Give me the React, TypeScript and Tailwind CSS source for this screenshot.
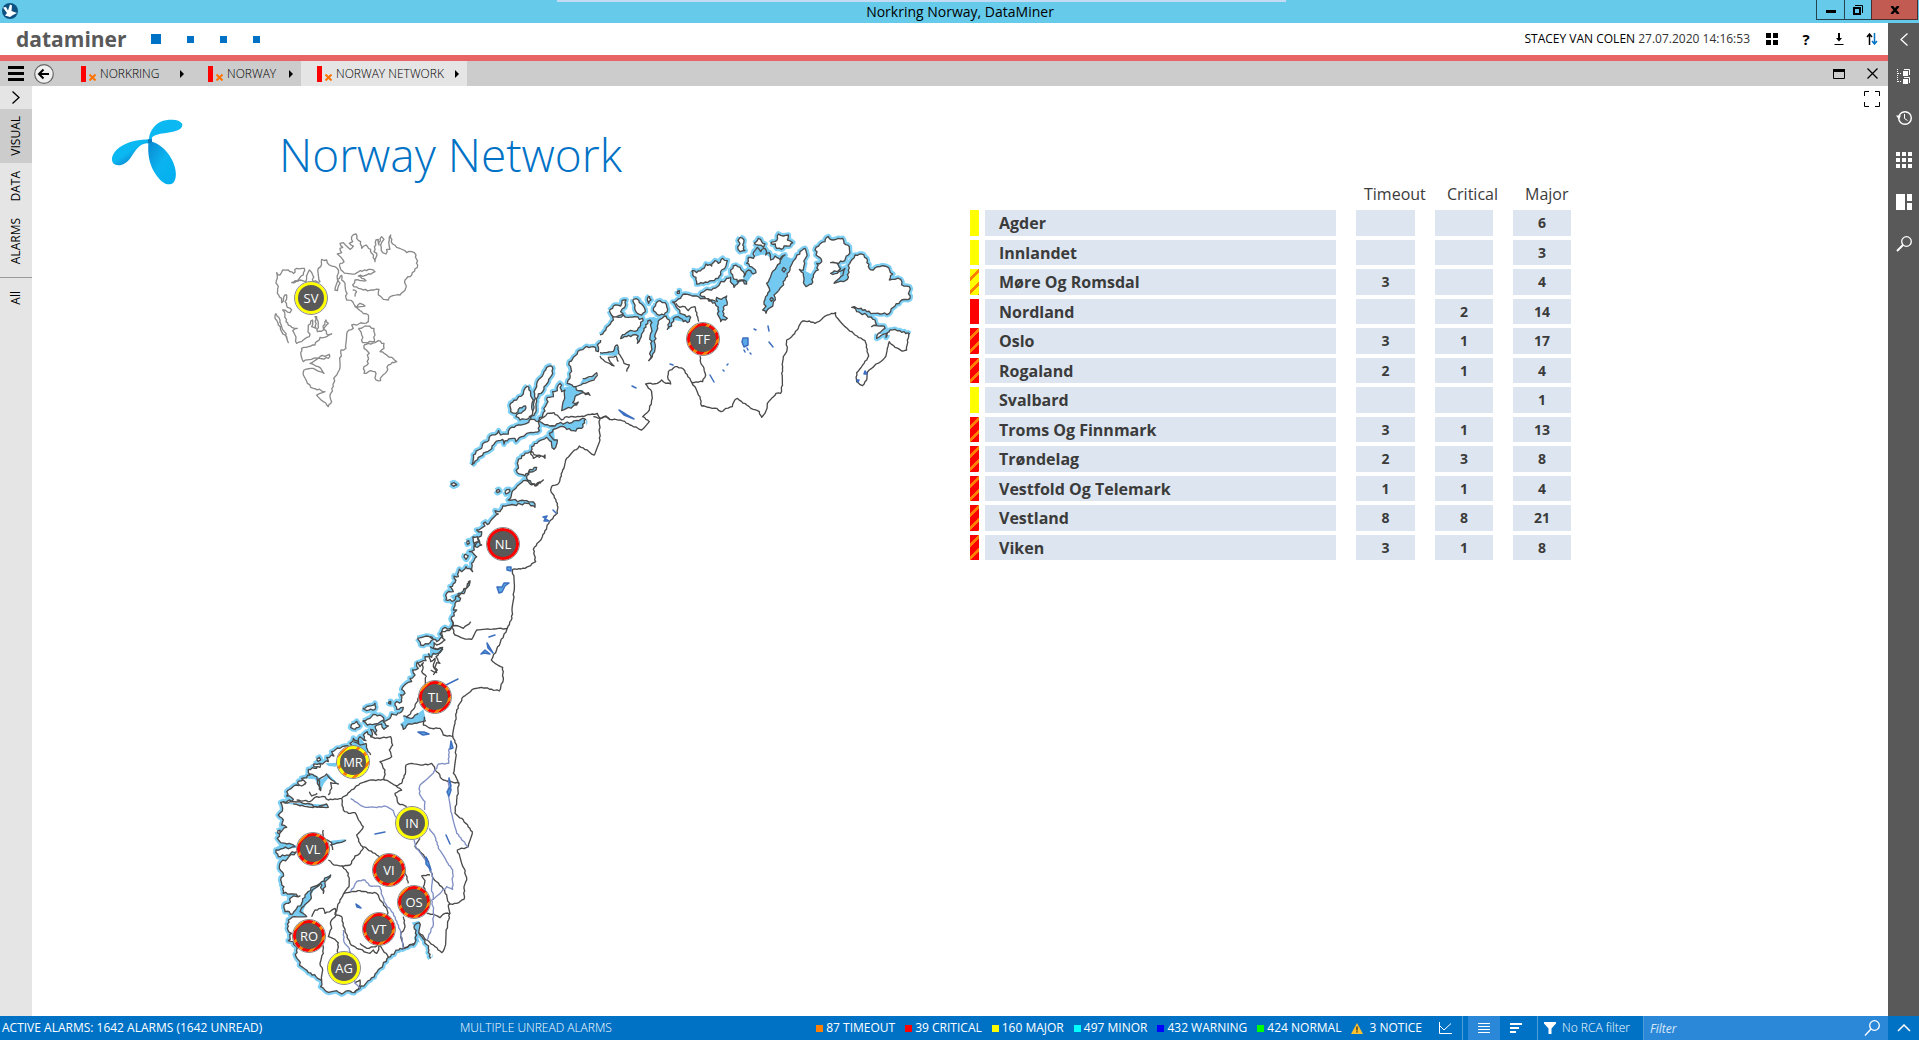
import { useState } from 'react';
import type { ReactNode } from 'react';
import clsx from 'clsx';

type Severity = 'major' | 'critical' | 'major-timeout' | 'critical-timeout';

interface Region {
  name: string;
  severity: Severity;
  timeout?: number;
  critical?: number;
  major?: number;
}

const regions: Region[] = [
  { name: 'Agder', severity: 'major', major: 6 },
  { name: 'Innlandet', severity: 'major', major: 3 },
  { name: 'Møre Og Romsdal', severity: 'major-timeout', timeout: 3, major: 4 },
  { name: 'Nordland', severity: 'critical', critical: 2, major: 14 },
  { name: 'Oslo', severity: 'critical-timeout', timeout: 3, critical: 1, major: 17 },
  { name: 'Rogaland', severity: 'critical-timeout', timeout: 2, critical: 1, major: 4 },
  { name: 'Svalbard', severity: 'major', major: 1 },
  { name: 'Troms Og Finnmark', severity: 'critical-timeout', timeout: 3, critical: 1, major: 13 },
  { name: 'Trøndelag', severity: 'critical-timeout', timeout: 2, critical: 3, major: 8 },
  { name: 'Vestfold Og Telemark', severity: 'critical-timeout', timeout: 1, critical: 1, major: 4 },
  { name: 'Vestland', severity: 'critical-timeout', timeout: 8, critical: 8, major: 21 },
  { name: 'Viken', severity: 'critical-timeout', timeout: 3, critical: 1, major: 8 },
];

const severityFill: Record<Severity, string> = {
  major: 'bg-[#ffff00]',
  critical: 'bg-[#ff0000]',
  'major-timeout':
    'bg-[repeating-linear-gradient(135deg,#ffff00_0px,#ffff00_6px,#ff8000_6px,#ff8000_9px)]',
  'critical-timeout':
    'bg-[repeating-linear-gradient(135deg,#ff0000_0px,#ff0000_6px,#ff8000_6px,#ff8000_9px)]',
};

// Pin centres on the map
const pins: { code: string; x: number; y: number; severity: Severity }[] = [
  { code: 'SV', x: 49, y: 73, severity: 'major' },
  { code: 'TF', x: 441, y: 114, severity: 'critical-timeout' },
  { code: 'NL', x: 241, y: 319, severity: 'critical' },
  { code: 'TL', x: 173, y: 472, severity: 'critical-timeout' },
  { code: 'MR', x: 91, y: 537, severity: 'major-timeout' },
  { code: 'IN', x: 150, y: 598, severity: 'major' },
  { code: 'VL', x: 51, y: 624, severity: 'critical-timeout' },
  { code: 'VI', x: 127, y: 645, severity: 'critical-timeout' },
  { code: 'OS', x: 152, y: 677, severity: 'critical-timeout' },
  { code: 'VT', x: 117, y: 704, severity: 'critical-timeout' },
  { code: 'RO', x: 47, y: 711, severity: 'critical-timeout' },
  { code: 'AG', x: 82, y: 743, severity: 'major' },
];

const legend = [
  { label: '87 TIMEOUT', color: 'bg-[#ff8000]' },
  { label: '39 CRITICAL', color: 'bg-[#ff0000]' },
  { label: '160 MAJOR', color: 'bg-[#ffff00]' },
  { label: '497 MINOR', color: 'bg-[#00ffff]' },
  { label: '432 WARNING', color: 'bg-[#0000ff]' },
  { label: '424 NORMAL', color: 'bg-[#00ff00]' },
];

/* ---------- Map drawing ---------- */

// Breaks long segments up so that a shoreline looks ragged
function rough(points: string, amount: number) {
  const pts = points.split(' ').map((p) => p.split(',').map(Number));
  const out: string[] = [];
  pts.forEach(([x, y], i) => {
    out.push(`${x},${y}`);
    const next = pts[i + 1];
    if (!next) return;
    const dx = next[0] - x;
    const dy = next[1] - y;
    const len = Math.hypot(dx, dy);
    const steps = Math.floor(len / 6);
    for (let k = 1; k < steps; k++) {
      const seed = Math.sin(x * 12.9 + y * 78.2 + k * 37.7) * 43758.5;
      const off = (seed - Math.floor(seed) - 0.5) * 2 * amount;
      const px = x + (dx * k) / steps - (dy / len) * off;
      const py = y + (dy * k) / steps + (dx / len) * off;
      out.push(`${px.toFixed(1)},${py.toFixed(1)}`);
    }
  });
  return out.join(' ');
}

interface Sheet {
  transform: string;
  coasts: { line: string; inland: string }[];
  islands: string[];
  water: string[];
  borders: string[];
}

const sheets: Sheet[] = [
  // Lofoten and Vesterålen
  {
    transform: 'translate(260 220) scale(0.33333)',
    coasts: [
      {
        line: '975,597 950,601 935,608 890,612 885,618 862,614 835,605 850,578 856,560 864,545 862,532 880,530 878,515 892,512 900,490 905,515 915,510 912,540 905,572 920,565 950,555 955,546 938,548 945,530 962,520 985,518 990,526 972,518 962,512 940,500 922,490 930,475 932,440 928,425 945,408 960,390 980,379 1000,380 1015,395 1012,375 1022,360',
        inland: '1060,420 1060,590',
      },
    ],
    islands: [
      '635,735 640,705 655,690 665,685 668,672 682,665 690,648 712,640 716,632 722,645 745,642 750,625 775,615 800,610 815,598 835,605 838,632 820,638 800,640 785,650 768,665 765,655 735,662 732,672 728,658 705,668 690,690 655,712 642,730 635,735',
      '875,438 878,460 865,485 852,500 848,515 835,522 830,545 828,575 812,595 822,560 826,535 822,515 830,500 832,485 850,462 860,442 875,438',
      '802,498 812,520 820,540 815,560 818,580 800,598 780,600 768,590 770,584 795,570 797,558 775,568 768,580 752,575 752,550 770,540 776,530 790,522 795,505 802,498',
      '576,794 582,790 590,794 582,798 576,794',
    ],
    water: [
      '918,500 940,500 950,510 970,510 965,520 945,532 940,548 925,562 906,570 914,540',
      '975,597 965,615 945,628 920,625 895,628 895,616 935,608',
      '1010,462 995,472 968,478 958,496 975,486 1002,478',
    ],
    borders: [
      '835,605 850,592 862,580 882,578 905,600 920,590 960,590 990,584 1012,580 1018,592 1020,660 1003,705 958,678 920,715 908,750 900,780 893,793 878,797',
      '1000,590 1020,595 1038,590 1050,600',
      '940,500 958,496 975,490 1002,480 1012,466 1010,458 995,470 968,476',
    ],
  },
  // Troms and Finnmark
  {
    transform: 'translate(600 220) scale(0.33333)',
    coasts: [
      {
        line: '0,345 12,335 25,318 40,300 38,290 55,292 70,285 85,292 105,290 118,298 128,295 120,320 105,334 85,335 68,344 62,356 80,350 98,345 115,348 112,370 124,350 132,325 150,300 156,308 152,340 152,370 156,388 146,422 158,402 166,380 164,350 172,318 180,298 198,288 208,300 202,328 215,318 220,295 235,290 250,305 268,305 272,292 255,285 240,280 232,265 218,246 235,237 255,222 270,225 290,228 310,235 345,248 355,262 352,280 362,305 382,295 370,287 370,262 382,248 380,228 365,238 350,232 352,244 330,240 300,225 315,212 340,205 360,190 380,175 392,172 395,190 402,202 412,192 425,182 440,192 432,180 412,185 398,165 392,150 400,138 420,142 430,155 432,170 445,150 460,162 468,158 460,145 440,130 445,112 460,115 462,95 472,82 482,95 495,85 497,105 508,98 512,120 525,108 540,118 555,105 540,130 520,152 508,178 500,190 508,205 502,225 492,245 498,258 488,270 498,280 512,262 526,240 522,225 540,205 555,180 570,150 585,118 600,95 615,85 620,100 614,130 610,150 598,148 610,160 612,180 618,200 635,192 640,165 655,150 650,130 665,125 655,110 645,90 660,72 675,65 685,50 700,60 715,55 728,55 732,70 748,80 745,105 728,125 692,128 715,135 722,146 692,160 712,160 735,145 722,170 702,190 730,185 742,178 745,150 752,125 765,105 785,102 800,115 805,140 820,150 840,140 860,140 878,162 868,180 885,178 902,178 905,195 928,200 930,235 905,240 880,262 868,280 840,282 800,275 770,264 755,262 770,275 800,285 825,300 830,315 815,320 845,318 855,325 835,340 830,355 845,345 862,340 858,352 870,330 885,328 900,332 930,342',
        inland: '920,350 820,340 740,290 650,280 560,320 300,440 0,500',
      },
    ],
    islands: [
      '28,272 45,255 62,258 66,242 78,240 74,262 62,275 70,282 50,290 35,286 28,272',
      '100,238 110,236 118,248 130,258 136,275 125,285 112,280 104,262 100,238',
      '148,228 153,240 146,250 142,240 148,228',
      '168,250 180,242 195,248 203,268 192,285 172,284 160,272 168,250',
      '275,152 290,158 312,145 318,132 335,138 345,122 355,130 368,115 382,122 378,138 365,150 355,175 335,182 310,190 290,192 288,172 278,165 275,152',
      '420,52 432,60 428,75 435,92 420,95 413,80 420,70 414,62 420,52',
      '462,70 475,55 485,65 495,72 490,82 475,75 462,70',
      '512,70 530,62 535,42 550,48 565,45 562,60 578,68 570,78 552,78 545,88 530,85 526,72 512,70',
      '232,214 238,212 238,220 232,220 232,214',
    ],
    water: [
      '552,108 538,130 520,152 504,186 508,205 494,245 498,258 490,274 505,270 524,240 520,226 540,205 566,150 580,118 565,112',
      '98,345 120,322 140,300 160,290 175,296 162,320 152,312 140,300 128,322 114,345',
      '352,246 368,240 382,232 370,262 370,287 380,296 362,303 352,282',
      '715,135 735,145 745,150 742,178 702,190 722,170',
      '610,150 640,165 635,192 618,200 612,180',
      '156,308 152,370 158,402 164,350 172,312',
      '0,398 40,396 48,378 58,384 56,402 45,408 20,406 0,406',
      '220,295 202,328 210,326 222,300 250,305 268,305 272,292 240,282',
      '392,172 412,185 432,180 428,170 445,150 462,158 440,190 425,182 402,202',
      '462,95 472,82 482,95 495,85 510,98 512,115 500,104 484,104 466,110',
    ],
    borders: [
      '0,398 20,398 40,394 48,376 52,375 56,400 66,415 72,430 88,435 80,455',
      '0,408 15,425 28,430 42,438 30,425 25,412 48,408 55,425',
      '926,342 922,360 920,390 905,393 885,382 868,365 862,385 858,408 848,420 828,432 815,445 803,455 800,480 787,497 770,485 770,458 788,435 806,408 795,362 765,345 735,320 708,290 707,278 695,280 682,285 665,298 645,310 628,303 608,303 595,325 575,350 560,360 560,395 550,410 548,440 545,460 547,490 542,520 528,520 515,535 502,550 498,572 485,592 478,575 460,568 440,555 425,545 412,535 402,545 397,560 378,565 363,575 350,565 330,563 305,558 300,530 285,500 275,487 250,447 225,440 205,455 203,470 212,492 198,490 185,480 172,490 137,492 155,515 157,535 148,570 128,590 148,605 125,630 90,615 62,600 30,598 18,588 0,595',
      '296,305 290,285 285,260 275,262 265,272 255,260 240,262 228,250',
      '300,408 302,428 312,445 317,465 308,485 275,487',
      '550,142 558,148 552,156 546,150 550,142',
      '514,232 520,238 514,244 510,238 514,232',
    ],
  },
  // Nordland
  {
    transform: 'translate(430 380) scale(0.33333)',
    coasts: [
      {
        line: '468,117 455,145 430,152 400,140 370,148 358,160 372,180 382,180 372,208 364,185 350,172 325,185 305,200 302,215 310,235 345,225 345,235 320,226 300,215 275,228 262,250 262,278 285,288 300,268 320,262 318,270 297,276 290,295 315,318 340,300 318,318 295,305 280,302 262,318 245,340 235,360 270,362 290,362 315,372 315,382 290,370 240,375 218,378 210,395 195,392 205,402 178,430 160,430 165,438 140,450 155,455 145,480 155,495 135,500 148,480 130,475 133,510 118,515 140,530 125,550 128,575 108,560 95,575 88,568 85,590 72,588 75,608 60,620 70,635 50,640 48,660 72,662 85,640 100,632 120,602 105,635 85,650 92,655 75,670 70,690 80,690 66,710 68,735 62,745 45,742 35,755 38,770 20,785 0,770',
        inland: '40,820 230,560 380,300 470,180',
      },
    ],
    islands: [
      '62,312 72,308 80,314 70,318 62,312',
      '198,332 206,328 210,334 202,338 198,332',
      '225,335 238,328 240,334 228,342 225,335',
      '105,522 115,528 108,538 102,530 105,522',
      '128,470 142,470 146,486 132,490 128,470',
      '110,485 116,482 118,490 112,493 110,485',
    ],
    water: [
      '468,117 455,145 430,152 402,138 400,132 438,126',
      '355,150 372,150 374,176 384,180 372,208 360,180',
      '0,800 38,805 20,830 30,850 14,860 10,880 0,840',
      '60,648 100,632 85,650 72,662',
    ],
    borders: [
      '65,740 75,765 100,775 125,778 140,750 180,748 232,745',
      '68,738 85,738 100,745 122,725',
      '0,800 20,808 38,802 30,815 18,830 30,850 20,848 14,862 22,870 10,885',
      '368,315 362,330 382,370 382,400 358,425 335,475 310,508 317,545 285,565 248,568 253,625 246,690 246,715 232,745 184,840 195,850 218,862 220,900',
    ],
  },
  // Southern Norway
  {
    transform: 'translate(260 620) scale(0.33333)',
    coasts: [
      {
        line: '575,0 580,15 572,28 555,35 540,42 555,60 545,68 530,75 522,68 520,85 548,88 540,98 520,100 515,112 495,110 498,122 470,130 475,145 458,150 465,165 450,175 455,185 440,190 425,208 435,220 422,225 425,245 405,250 410,268 430,262 425,275 410,285 395,282 390,295 370,305 385,318 372,328 365,312 345,320 350,345 332,328 335,350 322,335 310,345 318,362 300,350 296,370 280,355 270,370 276,385 255,378 240,385 215,395 222,408 200,412 205,425 180,430 170,445 145,448 150,465 125,475 135,492 110,495 85,510 80,528 100,538 78,548 62,548 68,565 55,585 70,600 65,615 80,622 58,640 52,655 62,668 80,672 105,680 70,685 48,690 55,710 80,705 110,695 85,712 60,730 58,745 70,760 62,780 72,800 70,820 90,822 120,828 95,832 85,850 72,855 75,875 98,882 110,865 125,850 140,820 160,800 185,785 212,765 195,785 190,820 180,790 155,815 150,840 130,860 120,875 140,890 105,890 85,900 82,925 95,940 85,962 100,965 112,985 108,1010 125,1040 145,1058 168,1070 185,1082 182,1100 200,1115 230,1112 245,1122 265,1112 282,1118 300,1105 330,1080 345,1062 360,1045 385,1012 420,985 445,980 465,968 470,945 462,920 478,908 480,945 495,962 505,985 512,1015',
        inland: '540,960 560,500 700,180 700,0',
      },
    ],
    islands: [
      '275,312 290,304 300,318 285,328 272,322 275,312',
      '308,302 330,295 340,283 365,288 372,300 345,312 322,315 308,302',
      '308,265 328,258 345,250 345,268 320,272 308,265',
      '472,55 500,48 520,58 505,72 482,75 472,55',
      '170,418 178,412 182,420 174,424 170,418',
      '160,432 178,430 180,442 162,440 160,432',
      '112,488 130,480 138,488 125,498 112,488',
      '386,246 392,244 392,252 386,250 386,246',
      '52,634 60,630 60,640 54,640 52,634',
    ],
    water: [
      '430,288 455,295 475,280 490,268 498,300 470,310 445,312 430,328 420,312 432,304',
      '120,470 140,462 165,465 185,478 205,462 235,492 205,475 192,490 182,512 165,478 145,476',
      '80,549 120,550 200,554 202,560 150,557 90,553',
      '48,682 70,668 108,676 108,684 72,686 50,694',
      '212,662 255,658 258,664 216,676',
      '104,880 142,820 208,765 214,770 160,812 130,870 132,890 118,884',
      '455,908 478,902 476,918 472,950 480,968 462,960 468,926',
      '515,95 548,84 546,96 520,106',
      '272,372 300,352 320,378 325,400 300,385 285,380',
      '196,430 230,428 228,440 205,438',
    ],
    borders: [
      '70,548 110,546 150,552 172,562 200,552 205,562 180,562 140,560 100,552',
      '150,462 170,470 172,490 182,512 176,478 200,462 215,480 235,492 212,488 215,505 205,525',
      '148,515 155,528 172,520',
      '110,540 150,545 170,530 195,530 205,540 245,535 270,515 300,490 335,480 375,480 408,497 425,490 436,462 438,435 455,430 490,435 515,430 530,455 550,480 597,490',
      '330,350 345,355 392,350 398,375 388,390 395,410 360,425 375,450 372,480',
      '493,290 490,315 515,325 540,325 550,345 580,350',
      '497,170 495,200 480,225 465,260 440,295',
      '430,288 455,295 475,280',
      '425,312 430,328 445,312 470,310 498,302',
      '280,365 300,375 318,370 322,388 332,405',
      '245,535 250,570 265,580 285,578 300,605 310,620 290,645 300,670 310,685 300,700 285,708 270,735 248,740 265,760 267,800 250,822 240,840 225,885',
      '310,680 350,705 385,725 430,740 445,790',
      '408,497 425,510 405,520 415,550 440,560',
      '205,720 222,735 250,738',
      '250,822 275,815 300,812 330,818 350,820 360,840 380,865 385,900 400,912',
      '480,655 465,680 485,700 500,715 510,745 520,775 545,800 560,825 568,855',
      '510,765 485,768 495,782 490,800 500,820',
      '155,890 165,870 190,865 195,880 225,865 228,885 245,890 255,935 270,970 290,985 330,1000 340,990 350,1000 360,975 385,1012',
      '228,885 212,905 215,925 205,950 225,958 235,968 232,1005 245,1020',
      '188,975 190,1000 180,1030 188,1050 185,1080',
      '300,970 320,985 360,975 372,960',
      '430,890 435,920 422,945 430,985 465,970',
      '500,880 525,885 540,893 555,880 570,882',
      '190,630 188,655 215,668 218,690',
      '210,675 240,668 258,660',
      '478,938 500,960 520,975 545,998 555,980 563,905 570,880 565,855 590,850 612,838 612,800 620,780 612,745 592,690 625,680 637,635 610,600 585,580 590,540 597,490 580,460 590,380 578,350 585,310 590,270 610,230 635,210 665,202 718,213 730,180',
      '470,125 480,140 490,128 485,155 500,170',
      '505,100 512,125 525,115 520,140 530,158 512,150',
      '285,1118 298,1100 300,1080 285,1090',
    ],
  },
];

const svalbard = [
  '240,130 252,125 243,112 232,102 245,98 240,85 248,82 240,70 250,68 262,80 270,88 280,78 268,70 278,65 275,50 288,42 290,55 302,65 305,85 318,75 332,88 345,125 350,100 342,95 348,60 355,58 357,75 365,50 372,58 362,75 368,98 378,102 380,88 390,88 388,60 392,45 398,72 410,82 430,90 440,98 455,95 468,105 473,135 455,165 435,180 437,205 420,225 395,228 385,240 370,238 355,225 357,208 335,210 310,210 295,205 278,195 285,180 300,182 318,182 305,175 295,168 320,165 345,155 332,148 300,152 285,162 260,160 243,150 240,130',
  '245,165 232,178 240,190 232,212 225,210 232,175 235,150 225,140 208,135 200,120 185,118 182,140 175,145 180,185 160,185 158,165 148,150 140,175 138,185 120,180 95,188 112,182 130,165 133,145 110,145 100,160 85,150 68,150 60,165 50,158 52,175 48,190 55,200 52,220 65,235 65,248 75,225 80,225 75,245 82,262 95,270 90,278 68,270 75,285 78,305 95,322 112,325 98,332 105,345 110,370 125,365 148,350 145,315 158,300 155,320 168,325 165,290 170,290 175,310 172,335 190,330 205,310 198,300 190,325 205,345 215,342 200,350 180,352 165,375 145,380 125,385 123,405 130,425 160,415 205,415 208,403 180,410 150,430 175,440 192,460 180,455 160,445 132,450 130,465 142,490 160,505 195,515 180,520 170,525 190,545 205,560 215,545 210,530 220,500 225,470 238,450 243,390 258,385 262,335 280,325 275,315 310,310 325,305 325,285 305,275 285,260 315,258 300,250 290,262 278,245 260,240 258,215 255,190 245,180 245,165',
  '278,210 290,215 285,230',
  '295,325 315,318 342,325 343,365 308,368 305,345 295,325',
  '312,375 345,368 355,362 372,370 372,385 360,395 380,405 395,412 410,425 385,435 380,455 365,470 362,482 348,480 345,455 325,455 312,460 312,440 325,430 322,405 328,400 312,385 312,375',
  '47,280 60,300 65,320 78,340 85,368 75,345 65,335 55,315 45,295 47,280',
];

// Inland lakes, in map pixels
const lakes = [
  '743,338 748,338 748,345 744,347 742,342',
  '768,326 769,331',
  '769,342 773,347',
  '747,348 748,350',
  '744,350 745,352',
  '750,353 751,354',
  '754,329 756,330',
  '723,370 724,371',
  '727,365 728,364',
  '710,375 714,382',
  '632,386 636,388',
  '670,364 673,365',
  '619,410 627,415 634,419 624,415',
  '865,371 867,374 864,374',
  '857,380 859,380 858,382',
  '543,517 549,521 544,521 547,516',
  '553,510 556,513',
  '507,567 511,567 511,571 507,570',
  '509,583 505,586 502,592 499,593 497,587 502,587 504,583',
  '489,637 495,635',
  '487,643 493,653 488,648',
  '481,654 485,650 490,654 484,653',
  '446,685 458,679',
  '418,732 424,732 429,734 423,735',
  '451,741 453,748 450,749',
  '449,778 451,790 449,796 447,792 451,786',
  '446,835 450,844',
  '375,834 380,833 385,832',
  '356,904 359,906 361,908 357,907',
  '426,857 429,864 431,870 426,864',
];

const rivers = [
  '272,536 285,545 310,560 345,562 375,558 400,572 408,592',
  '568,385 566,430 535,432 520,460 480,495 478,520 495,545 494,570',
  '508,625 525,650 535,685 560,725 578,750 578,808 560,800 545,815 515,840 520,870 520,915 500,960',
  '566,475 565,520 575,580 590,640 625,682',
  '272,815 290,785 315,780 328,797 360,800 372,845 400,880 422,935 430,985',
  '250,930 252,965 268,985 275,1050 285,1090 300,1105',
  '462,660 468,682 505,735 518,770 515,800 520,840',
];

function CountryMap() {
  return (
    <svg viewBox="262 225 660 780" className="block w-full" aria-hidden="true" strokeLinejoin="round">
      {sheets.map((sheet) => (
        <g key={sheet.transform} transform={sheet.transform} fill="none" stroke="#7fd0f5" strokeWidth="17">
          {sheet.coasts.map((c) => (
            <polyline key={c.line} points={rough(c.line, 4)} />
          ))}
          {sheet.islands.map((p) => (
            <polyline key={p} points={rough(p, 3)} />
          ))}
        </g>
      ))}
      {sheets.map((sheet) => (
        <g key={sheet.transform} transform={sheet.transform}>
          {sheet.coasts.map((c) => (
            <polygon key={c.line} points={`${rough(c.line, 4)} ${c.inland}`} fill="#fff" />
          ))}
          {sheet.water.map((p) => (
            <polygon key={p} points={p} fill="#74c9f1" />
          ))}
        </g>
      ))}
      {sheets.map((sheet) => (
        <g key={sheet.transform} transform={sheet.transform} fill="none" stroke="#4a4a4a" strokeWidth="4">
          {sheet.coasts.map((c) => (
            <polyline key={c.line} points={rough(c.line, 4)} />
          ))}
          {sheet.islands.map((p) => (
            <polyline key={p} points={rough(p, 3)} fill="#fff" />
          ))}
          {sheet.borders.map((p) => (
            <polyline key={p} points={rough(p, 2)} />
          ))}
        </g>
      ))}
      <g transform="translate(260 620) scale(0.33333)" fill="none" stroke="#7f8fc4" strokeWidth="4">
        {rivers.map((p) => (
          <polyline key={p} points={rough(p, 2)} />
        ))}
      </g>
      <g fill="#5aa9e6" stroke="#3d6fc0" strokeWidth="1.5">
        {lakes.map((p) => (
          <polygon key={p} points={p} />
        ))}
      </g>
      <g transform="translate(260 220) scale(0.33333)" fill="none" stroke="#8a8a8a" strokeWidth="4">
        {svalbard.map((p) => (
          <polyline key={p} points={rough(p, 3)} />
        ))}
      </g>
    </svg>
  );
}

function BrandMark() {
  return (
    <svg viewBox="336 356 213 198" className="h-[66px] w-[71px]" aria-hidden="true">
      <defs>
        <linearGradient id="petal" x1="0" y1="0" x2="1" y2="1">
          <stop offset="0" stopColor="#0a86d0" />
          <stop offset="0.5" stopColor="#0bb4f0" />
          <stop offset="1" stopColor="#00aeef" />
        </linearGradient>
        <linearGradient id="wing" x1="0" y1="0" x2="1" y2="1">
          <stop offset="0.45" stopColor="#0bb8f2" />
          <stop offset="0.75" stopColor="#0a7cc9" />
        </linearGradient>
      </defs>
      <path d="M446 422C442 455 446 490 466 520C482 546 505 560 520 547C534 530 528 495 508 465C492 441 468 425 446 422Z" fill="url(#petal)" />
      <path d="M452 418C420 414 376 424 350 448C334 464 332 482 342 491C358 500 378 492 392 472C408 448 420 430 440 429L454 431Z" fill="url(#wing)" />
      <path d="M447 421C446 400 458 376 482 364C506 355 540 356 547 372C548 388 526 394 502 397C478 400 460 404 456 412L455 430L447 430Z" fill="#0bb8f2" />
      <path d="M443 417L456 417L455 430L445 429Z" fill="#0b78be" />
    </svg>
  );
}

/* ---------- Chrome ---------- */

function TitleBar() {
  return (
    <div className="relative flex h-[23px] items-start bg-[#66caea]">
      <div className="absolute left-[29%] right-[33%] top-0 h-0.5 bg-[#c3dcf3]" />
      <div className="flex flex-1 pl-0.5 pt-[3px]">
        <svg viewBox="0 0 16 16" className="size-4" aria-hidden="true">
          <circle cx="8" cy="8" r="8" fill="#0d5283" />
          <path d="M1 4.500L4 4L6 7.500L8 1.500L10 2.500L9.500 8L15 10L11 12L8 14L3 12.500L5 10Z" fill="#fff" />
        </svg>
      </div>
      <div className="text-[14px] leading-6 text-black">Norkring Norway, DataMiner</div>
      <div className="flex flex-1 justify-end pr-px">
        <button aria-label="Minimize" className="flex h-5 w-[29px] items-center justify-center border border-t-0 border-[#26444f]">
          <span className="mt-1 h-[3px] w-2.5 bg-black" />
        </button>
        <button aria-label="Restore" className="flex h-5 w-[26px] items-center justify-center border-b border-[#26444f]">
          <svg viewBox="0 0 10 10" className="size-2.5" fill="none" stroke="#000" aria-hidden="true">
            <path d="M1 3H7V9H1Z" strokeWidth="2" />
            <path d="M2 0.500H9.500V8" />
          </svg>
        </button>
        <button aria-label="Close" className="flex h-5 w-[47px] items-center justify-center border border-t-0 border-[#4f2a28] bg-[#c25b52]">
          <svg viewBox="0 0 10 8" className="h-2 w-2.5" stroke="#000" strokeWidth="2.500" aria-hidden="true">
            <path d="M1.500 0L8.500 8M8.500 0L1.500 8" />
          </svg>
        </button>
      </div>
    </div>
  );
}

function AppHeader() {
  return (
    <header className="flex h-[38px] items-center border-b-6 border-[#e86464] bg-white pl-4">
      <div className="w-[135px] text-[21px] leading-8 font-bold text-[#595959]">dataminer</div>
      <div className="flex items-center gap-[26px]">
        <span className="size-2.5 bg-[#0072c6]" />
        <span className="size-[7px] bg-[#0072c6]" />
        <span className="size-[7px] bg-[#0072c6]" />
        <span className="size-[7px] bg-[#0072c6]" />
      </div>
      <div className="ml-auto text-[12px] leading-4 text-black">
        STACEY VAN COLEN <span className="text-[#333]">27.07.2020 14:16:53</span>
      </div>
      <div className="ml-4 flex items-center gap-[22px] pr-2.5">
        <button aria-label="Apps">
          <svg viewBox="0 0 12 12" className="size-3" aria-hidden="true">
            <path d="M0 0h5v5H0zM7 0h5v5H7zM0 7h5v5H0zM7 7h5v5H7z" />
          </svg>
        </button>
        <button className="w-3 text-[15px] leading-4 font-bold">?</button>
        <button aria-label="Download">
          <svg viewBox="0 0 10 12" className="h-3 w-2.5" aria-hidden="true">
            <path d="M4 0h2v5h2L5 8.500L2 5h2zM0.500 11h9v1h-9z" />
          </svg>
        </button>
        <button aria-label="Synchronize">
          <svg viewBox="0 0 12 12" className="size-3" fill="none" strokeWidth="1.500" aria-hidden="true">
            <path d="M3.500 12V1.500M1 4L3.500 1L6 4" stroke="#000" />
            <path d="M8.500 0V10.500M6 8L8.500 11L11 8" stroke="#0072c6" />
          </svg>
        </button>
      </div>
    </header>
  );
}

function Tab({ label, active, className }: { label: string; active?: boolean; className: string }) {
  return (
    <button className={clsx('flex h-full items-center', active && 'bg-[#e5e5e5]', className)}>
      <span className="h-4 w-[5px] bg-[#ff0000]" />
      <svg viewBox="0 0 7 7" className="mt-2 ml-[3px] size-[7px]" stroke="#ff7300" strokeWidth="2" aria-hidden="true">
        <path d="M0.500 0.500L6.500 6.500M6.500 0.500L0.500 6.500" />
      </svg>
      <span className="ml-1 text-left text-[12px] leading-4 font-light text-black">{label}</span>
      <svg viewBox="0 0 4 8" className="ml-auto h-2 w-1" aria-hidden="true">
        <path d="M0 0L4 4L0 8Z" />
      </svg>
    </button>
  );
}

function TabBar() {
  return (
    <nav className="flex h-[25px] items-center bg-[#cccccc]">
      <button aria-label="Menu" className="ml-2 flex w-4 flex-col gap-[3px]">
        <span className="h-[3px] bg-black" />
        <span className="h-[3px] bg-black" />
        <span className="h-[3px] bg-black" />
      </button>
      <button aria-label="Back" className="ml-2.5">
        <svg viewBox="0 0 20 20" className="size-5" fill="none" aria-hidden="true">
          <circle cx="10" cy="10" r="9.300" fill="#f0f0f0" stroke="#666" strokeWidth="1.200" />
          <path d="M15 10H6M9.500 5.500L5 10L9.500 14.500" stroke="#000" strokeWidth="2" />
        </svg>
      </button>
      <Tab label="NORKRING" className="ml-[27px] w-[103px]" />
      <Tab label="NORWAY" className="ml-6 w-[85px]" />
      <Tab label="NORWAY NETWORK" active className="ml-2 w-[166px] pr-2 pl-4" />
      <div className="ml-auto flex items-center gap-[22px] pr-2.5">
        <button aria-label="Window">
          <svg viewBox="0 0 12 10" className="h-2.5 w-3" aria-hidden="true">
            <path d="M0.500 1.500H11.500V9.500H0.500Z" fill="none" stroke="#000" />
            <path d="M0 0H12V3H0Z" />
          </svg>
        </button>
        <button aria-label="Close card">
          <svg viewBox="0 0 11 11" className="size-[11px]" stroke="#000" strokeWidth="1.300" aria-hidden="true">
            <path d="M0.500 0.500L10.500 10.500M10.500 0.500L0.500 10.500" />
          </svg>
        </button>
      </div>
    </nav>
  );
}

function SideTab({ label, active, className }: { label: string; active?: boolean; className: string }) {
  return (
    <button className={clsx('flex w-full items-center justify-center', active && 'bg-[#cccccc]', className)}>
      <span className="rotate-180 text-[12px] leading-4 text-black [writing-mode:vertical-rl]">{label}</span>
    </button>
  );
}

function SideBar() {
  return (
    <aside className="flex w-8 shrink-0 flex-col bg-[#e5e5e5]">
      <button aria-label="Expand" className="flex h-[23px] items-center justify-center">
        <svg viewBox="0 0 8 13" className="h-[13px] w-2" fill="none" stroke="#000" strokeWidth="1.300" aria-hidden="true">
          <path d="M0.500 0.500L7 6.500L0.500 12.500" />
        </svg>
      </button>
      <SideTab label="VISUAL" active className="h-[54px]" />
      <SideTab label="DATA" className="h-[46px]" />
      <SideTab label="ALARMS" className="h-16" />
      <div className="mt-1 border-t border-[#9a9a9a]" />
      <SideTab label="All" className="h-10" />
    </aside>
  );
}

function RailButton({ label, children }: { label: string; children: ReactNode }) {
  return (
    <button aria-label={label} className="flex h-[42px] w-full items-center justify-center">
      <svg viewBox="0 0 16 16" className="size-4" fill="none" stroke="#fff" aria-hidden="true">
        {children}
      </svg>
    </button>
  );
}

function Rail() {
  return (
    <aside className="flex w-[31px] shrink-0 flex-col bg-[#595959]">
      <button aria-label="Collapse" className="flex h-8 items-center justify-center">
        <svg viewBox="0 0 8 13" className="h-[13px] w-2" fill="none" stroke="#fff" strokeWidth="1.300" aria-hidden="true">
          <path d="M7.500 0.500L1 6.500L7.500 12.500" />
        </svg>
      </button>
      <RailButton label="Surveyor">
        <path d="M1.500 1V14M2 5.500H6M2 13.500H6" strokeDasharray="1 1" />
        <path d="M7 3h5v5H7zM7 11h5v5H7z" fill="#fff" stroke="none" />
        <path d="M8 1.500H13.500V7M8 9.500H13.500V15" />
      </RailButton>
      <RailButton label="Recent">
        <circle cx="9" cy="8" r="6.300" strokeWidth="1.400" />
        <path d="M8.500 4V8.500L11.500 10.500" />
        <path d="M0 5.500H5L3 9.500Z" fill="#fff" stroke="none" />
      </RailButton>
      <RailButton label="Apps">
        <path d="M0 0h4v4H0zM6 0h4v4H6zM12 0h4v4H12zM0 6h4v4H0zM6 6h4v4H6zM12 6h4v4H12zM0 12h4v4H0zM6 12h4v4H6zM12 12h4v4H12z" fill="#fff" stroke="none" />
      </RailButton>
      <RailButton label="Workspace">
        <path d="M0 0h9v16H0zM11 0h5v7H11zM11 9h5v7H11z" fill="#fff" stroke="none" />
      </RailButton>
      <RailButton label="Search">
        <circle cx="10.500" cy="5.500" r="4.800" strokeWidth="1.300" />
        <path d="M7 9L1 15" strokeWidth="2" />
      </RailButton>
    </aside>
  );
}

function MapPins() {
  return (
    <>
      {pins.map((pin) => (
        <button
          key={pin.code}
          className={clsx(
            'absolute flex size-[34px] -translate-x-1/2 -translate-y-1/2 items-center justify-center rounded-full border border-[#8c8c8c] bg-clip-padding',
            severityFill[pin.severity]
          )}
          style={{ left: pin.x, top: pin.y }}
        >
          <span className="flex size-[26px] items-center justify-center rounded-full bg-[#595959] text-[13px] leading-4 text-white">
            {pin.code}
          </span>
        </button>
      ))}
    </>
  );
}

function AlarmTable() {
  const count = 'border-l-[20px] border-transparent bg-clip-padding bg-[#dde6f0] text-center text-[14px] leading-4 font-bold';

  return (
    <table className="mt-[92px] ml-12 w-[601px] shrink-0 table-fixed border-separate border-spacing-x-0 border-spacing-y-1 text-[#3b3b3b]">
      <colgroup>
        <col className="w-[9px]" />
        <col className="w-[357px]" />
        <col className="w-[79px]" />
        <col className="w-[78px]" />
        <col className="w-[78px]" />
      </colgroup>
      <thead>
        <tr className="h-6 text-left text-[16px] leading-6 whitespace-nowrap">
          <td />
          <td />
          <th className="pl-7 font-normal">Timeout</th>
          <th className="pl-8 font-normal">Critical</th>
          <th className="pl-8 font-normal">Major</th>
        </tr>
      </thead>
      <tbody>
        {regions.map((region) => (
          <tr key={region.name} className="odd:h-[26px] even:h-[25px]">
            <td className={severityFill[region.severity]} />
            <th className="border-l-6 border-transparent bg-[#dde6f0] bg-clip-padding pl-3.5 text-left text-[16px] leading-5 font-bold">
              {region.name}
            </th>
            <td className={count}>{region.timeout}</td>
            <td className={count}>{region.critical}</td>
            <td className={count}>{region.major}</td>
          </tr>
        ))}
      </tbody>
    </table>
  );
}

function StatusBar() {
  const [filter, setFilter] = useState('');

  return (
    <footer className="flex h-6 items-center bg-[#0072c6] text-[12px] leading-4 whitespace-nowrap text-white">
      <div className="w-[460px] pl-0.5">ACTIVE ALARMS: 1642 ALARMS (1642 UNREAD)</div>
      <div className="font-light">MULTIPLE UNREAD ALARMS</div>
      <div className="ml-auto flex items-center gap-2.5">
        {legend.map((item) => (
          <span key={item.label} className="flex items-center gap-[3px]">
            <span className={clsx('size-[7px]', item.color)} />
            {item.label}
          </span>
        ))}
        <span className="flex items-center gap-1.5">
          <svg viewBox="0 0 12 11" className="h-[11px] w-3" aria-hidden="true">
            <path d="M6 0L12 11H0Z" fill="#fdc12e" />
            <path d="M5.300 3.500h1.400v4H5.300zM5.300 8.300h1.400v1.300H5.300z" fill="#333" />
          </svg>
          3 NOTICE
        </span>
      </div>
      <button aria-label="Trend" className="ml-1.5 flex h-full w-[35px] items-center justify-center border-r border-[#4b9cd8]">
        <svg viewBox="0 0 13 12" className="h-3 w-[13px]" fill="none" stroke="#fff" aria-hidden="true">
          <path d="M0.500 0V11.500H13M1 4L5 8L12 1.500" />
        </svg>
      </button>
      <button aria-label="List view" className="ml-[5px] flex h-full w-8 items-center justify-center bg-[#2b88d8]">
        <svg viewBox="0 0 12 10" className="h-2.5 w-3" stroke="#fff" aria-hidden="true">
          <path d="M0 0.500H12M0 3.500H12M0 6.500H12M0 9.500H12" />
        </svg>
      </button>
      <button aria-label="Sort" className="flex h-full w-[38px] items-center justify-center border-r border-[#4b9cd8] pr-1.5">
        <svg viewBox="0 0 12 10" className="h-2.5 w-3" fill="#fff" aria-hidden="true">
          <path d="M0 0h12v2H0zM0 4h9v2H0zM0 8h6v2H0z" />
        </svg>
      </button>
      <button className="flex h-full w-[106px] items-center gap-1.5 border-r border-[#4b9cd8] pl-1.5 font-light">
        <svg viewBox="0 0 12 12" className="size-3" fill="#fff" aria-hidden="true">
          <path d="M0 0H12V1.500L7.500 6.500V12H4.500V6.500L0 1.500Z" />
        </svg>
        No RCA filter
      </button>
      <div className="flex h-full w-[244px] items-center bg-[#2b88d8] pr-2">
        <input
          type="text"
          aria-label="Filter alarms"
          placeholder="Filter"
          value={filter}
          onChange={(e) => setFilter(e.target.value)}
          className="h-full min-w-0 flex-1 pl-1.5 text-[12px] italic outline-none placeholder:text-white/80"
        />
        <svg viewBox="0 0 16 16" className="size-4" fill="none" stroke="#fff" strokeWidth="1.300" aria-hidden="true">
          <circle cx="10.500" cy="5.500" r="4.800" />
          <path d="M7 9L1 15.500" />
        </svg>
      </div>
      <button aria-label="Expand alarms" className="flex h-full w-[31px] items-center justify-center">
        <svg viewBox="0 0 14 8" className="h-2 w-3.5" fill="none" stroke="#fff" strokeWidth="1.500" aria-hidden="true">
          <path d="M1 7L7 1L13 7" />
        </svg>
      </button>
    </footer>
  );
}

export default function App() {
  return (
    <div className="flex min-h-screen flex-col bg-white font-['Open_Sans','Noto_Sans',sans-serif]">
      <TitleBar />
      <div className="flex flex-1">
        <div className="flex min-w-0 flex-1 flex-col">
          <AppHeader />
          <TabBar />
          <div className="flex flex-1">
            <SideBar />
            <main className="relative flex flex-1 items-start">
              <div className="w-[890px] shrink-0 pt-[33px]">
                <div className="flex items-start gap-24 pb-9 pl-20">
                  <BrandMark />
                  <h1 className="text-[46px] leading-[70px] font-light whitespace-nowrap text-[#0072c6]">Norway Network</h1>
                </div>
                <div className="relative ml-[230px] w-[660px]">
                  <CountryMap />
                  <MapPins />
                </div>
              </div>
              <AlarmTable />
              <button aria-label="Full screen" className="absolute top-[5px] right-2">
                <svg viewBox="0 0 16 16" className="size-4" fill="none" stroke="#000" aria-hidden="true">
                  <path d="M0.500 5V0.500H5M11 0.500H15.500V5M15.500 11V15.500H11M5 15.500H0.500V11" />
                </svg>
              </button>
            </main>
          </div>
        </div>
        <Rail />
      </div>
      <StatusBar />
    </div>
  );
}
